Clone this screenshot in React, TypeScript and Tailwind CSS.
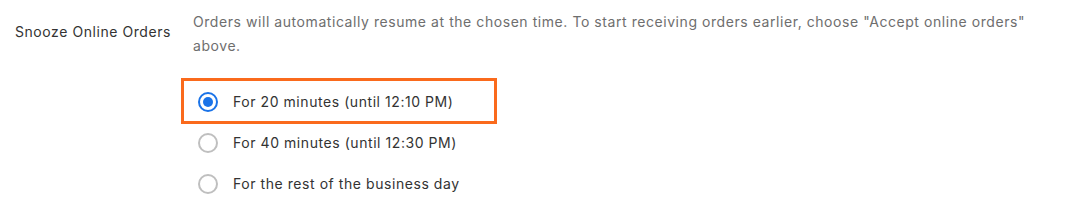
import { useState } from "react";

const OPTIONS = [
  { id: "20", label: "For 20 minutes (until 12:10 PM)" },
  { id: "40", label: "For 40 minutes (until 12:30 PM)" },
  { id: "day", label: "For the rest of the business day" },
];

function Radio({ checked }: { checked: boolean }) {
  return (
    <span
      className={
        checked
          ? "flex h-5 w-5 shrink-0 items-center justify-center rounded-full border-2 border-[#1a73e8]"
          : "flex h-5 w-5 shrink-0 items-center justify-center rounded-full border-2 border-[#bfbfbf]"
      }
    >
      {checked ? <span className="h-[10px] w-[10px] rounded-full bg-[#1a73e8]" /> : null}
    </span>
  );
}

export default function App() {
  const [selected, setSelected] = useState("20");

  return (
    <div
      className="h-[220px] w-[1070px] bg-white text-[14px] tracking-[0.04em]"
      style={{ fontFamily: "Inter, 'Noto Sans', sans-serif" }}
    >
      <div className="flex pl-[15px] pt-[10px]">
        <div className="w-[178px] shrink-0 pt-[10px] leading-6 text-[#333333]">
          Snooze Online Orders
        </div>
        <p className="w-[860px] leading-6 text-[#6e6e6e]">
          Orders will automatically resume at the chosen time. To start receiving orders earlier,
          choose "Accept online orders" above.
        </p>
      </div>

      <div className="mt-[23px] ml-[198px] flex w-[296px] flex-col">
        {OPTIONS.map((opt) => (
          <label
            key={opt.id}
            onClick={() => setSelected(opt.id)}
            className="relative flex h-[41px] cursor-pointer items-center gap-[15px] text-[#333333]"
          >
            <Radio checked={selected === opt.id} />
            <span>{opt.label}</span>
            {opt.id === "20" ? (
              <span className="pointer-events-none absolute -top-[3px] -bottom-[2px] -left-[17px] -right-[3px] border-[3px] border-[#fa6a1c]" />
            ) : null}
          </label>
        ))}
      </div>
    </div>
  );
}
